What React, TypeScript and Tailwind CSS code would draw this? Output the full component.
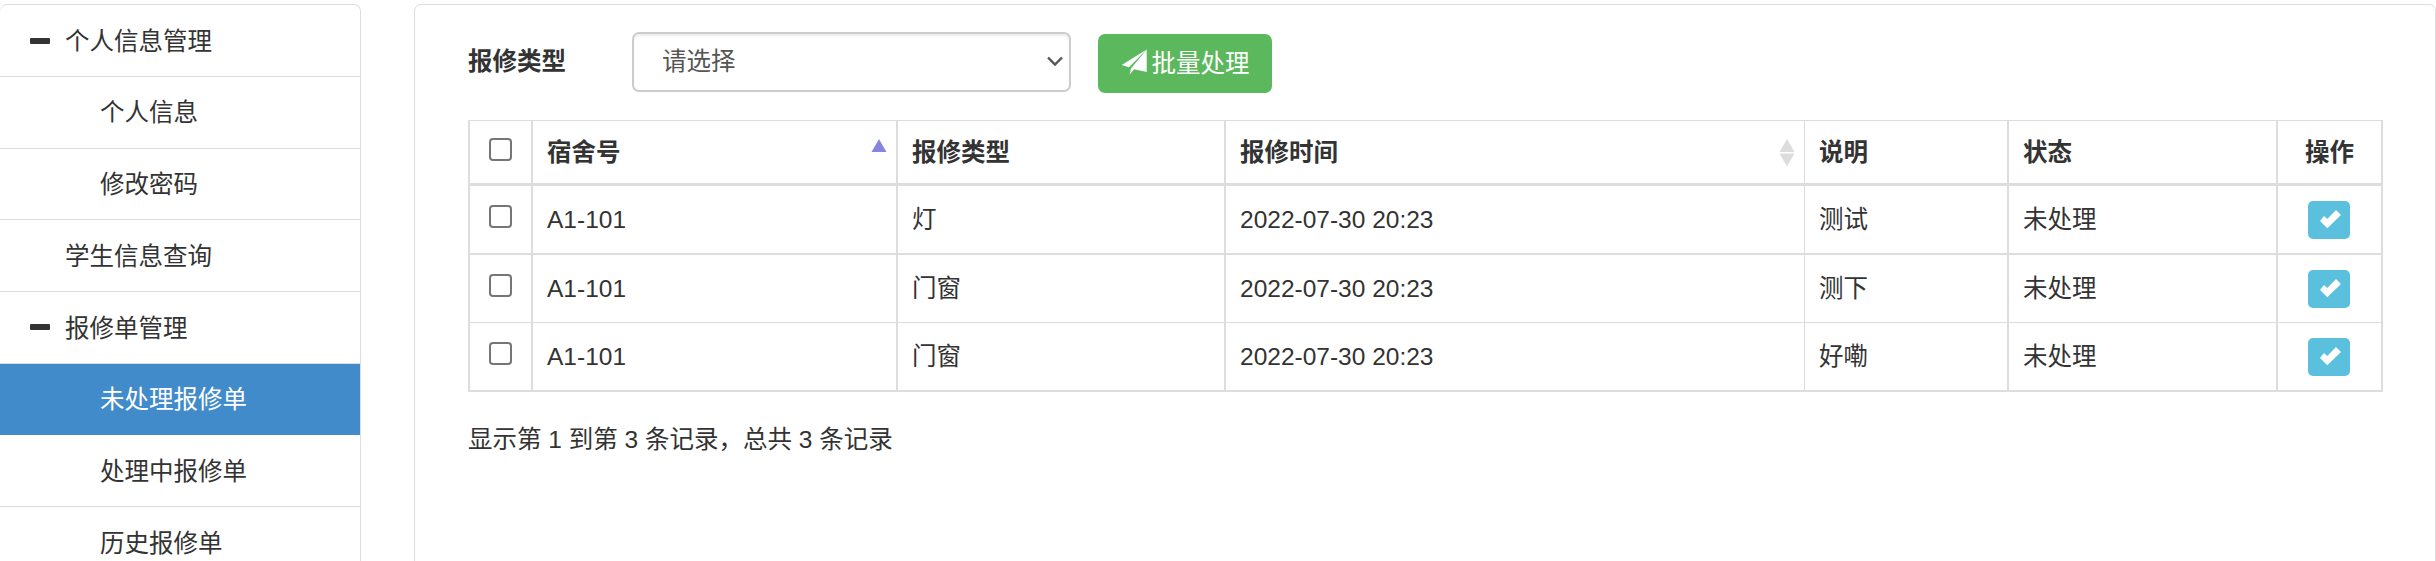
const menu = [
  { label: '个人信息管理', parent: true, open: true },
  { label: '个人信息' },
  { label: '修改密码' },
  { label: '学生信息查询', parent: true },
  { label: '报修单管理', parent: true, open: true },
  { label: '未处理报修单', active: true },
  { label: '处理中报修单' },
  { label: '历史报修单' },
];

const rows = [
  { room: 'A1-101', type: '灯', time: '2022-07-30 20:23', note: '测试', status: '未处理', rowClass: 'h-[69px] border-b-2' },
  { room: 'A1-101', type: '门窗', time: '2022-07-30 20:23', note: '测下', status: '未处理', rowClass: 'h-[68px] border-b' },
  { room: 'A1-101', type: '门窗', time: '2022-07-30 20:23', note: '好嘞', status: '未处理', rowClass: 'h-[69px] border-b-2' },
];

function SortArrows({ up, down }: { up: string; down?: string }) {
  return (
    <svg className="absolute right-[9px] top-[18px]" width="16" height="28" viewBox="0 0 16 28">
      <path d="M8 0 L15.5 13 L0.5 13 Z" fill={up} />
      {down && <path d="M0.5 14.5 L15.5 14.5 L8 27.5 Z" fill={down} />}
    </svg>
  );
}

function SendIcon() {
  return (
    <svg width="26" height="26" viewBox="0 0 26 26" fill="#fff" className="mb-[5px] shrink-0">
      <path d="M25.7 .5 L.7 16 L8 18.3 Z" />
      <path d="M25.7 .5 L10 19.5 L8.6 25.5 L13.2 20.2 L25.7 23 Z" />
    </svg>
  );
}

function CheckIcon() {
  return (
    <svg width="21" height="19" viewBox="0 0 21 19" fill="#fff" className="shrink-0">
      <path d="M0 11 L7.3 18.3 L21 5 L16 0 L7.3 9 L4 6 Z" />
    </svg>
  );
}

function Checkbox() {
  return <input type="checkbox" className="mx-auto block h-[23px] w-[23px] appearance-none rounded-[4px] border-2 border-[#767676] bg-white" />;
}

export default function App() {
  return (
    <div className="flex h-[561px] w-[2436px] overflow-hidden bg-white text-[24.5px] text-[#333] [font-family:'Liberation_Sans','Noto_Sans_CJK_SC',sans-serif]">
      {/* Sidebar */}
      <div className="mt-[4px] h-[640px] w-[361px] shrink-0 rounded-tr-[7px] rounded-tl-[7px] border border-l-0 border-[#ddd] pt-[0.3px]">
        {menu.map((item) => (
          <div
            key={item.label}
            className={`flex h-[71.7px] items-center border-b pt-[3px] ${item.parent ? 'pl-[30px]' : 'pl-[100px]'} ${
              item.active ? 'border-[#428bca] bg-[#428bca] text-white' : 'border-[#ddd]'
            }`}
          >
            {item.parent && (
              <span className="flex w-[35px] shrink-0">
                {item.open && <span className="mb-[3px] h-[6px] w-[20px] rounded-[1px] bg-[#333]"></span>}
              </span>
            )}
            {item.label}
          </div>
        ))}
      </div>

      {/* Main panel */}
      <div className="ml-[53px] mt-[4px] h-[640px] w-[2022px] shrink-0 rounded-[7px] border border-[#ddd] pl-[53px] pt-[27px]">
        <div className="flex h-[61px] items-start">
          <label className="flex h-[60px] w-[164px] shrink-0 items-center pt-[1px] font-bold">报修类型</label>
          <div className="relative h-[60px] w-[439px] shrink-0">
            <select className="h-full w-full appearance-none rounded-[7px] border-2 border-[#ccc] bg-white pl-[28px] text-[#555] shadow-[inset_0_2px_2px_rgba(0,0,0,0.075)]">
              <option>请选择</option>
            </select>
            <svg className="absolute right-[8px] top-[24px]" width="16" height="11" viewBox="0 0 16 11" fill="none" stroke="#555" strokeWidth="2.4">
              <path d="M1 1.5 L8 8.5 L15 1.5" />
            </svg>
          </div>
          <button className="ml-[27px] mt-[2px] flex h-[59px] w-[174px] items-center justify-center gap-[5px] rounded-[7px] bg-[#5cb85c] pt-[2px] text-white">
            <SendIcon />
            批量处理
          </button>
        </div>

        <table className="mt-[27px] w-[1915px] table-fixed border-separate border-spacing-0 border-b-0 border-l-2 border-t border-[#ddd]">
          <colgroup>
            <col className="w-[63px]" />
            <col className="w-[365px]" />
            <col className="w-[328px]" />
            <col className="w-[579px]" />
            <col className="w-[204px]" />
            <col className="w-[269px]" />
            <col className="w-[105px]" />
          </colgroup>
          <thead>
            <tr className="h-[65px] text-left font-bold">
              <th className="border-b-[3px] border-r-2 border-[#ddd] pb-[5px] align-middle">
                <Checkbox />
              </th>
              <th className="relative border-b-[3px] border-r-2 border-[#ddd] pl-[14px] pt-[2px]">
                宿舍号
                <SortArrows up="#8686e0" />
              </th>
              <th className="border-b-[3px] border-r-2 border-[#ddd] pl-[14px] pt-[2px]">报修类型</th>
              <th className="relative border-b-[3px] border-r border-[#ddd] pl-[14px] pt-[2px]">
                报修时间
                <SortArrows up="#dddddd" down="#dddddd" />
              </th>
              <th className="border-b-[3px] border-r-2 border-[#ddd] pl-[14px] pt-[2px]">说明</th>
              <th className="border-b-[3px] border-r-2 border-[#ddd] pl-[14px] pt-[2px]">状态</th>
              <th className="border-b-[3px] border-r-2 border-[#ddd] pt-[2px] text-center">操作</th>
            </tr>
          </thead>
          <tbody>
            {rows.map((row, i) => (
              <tr key={i}>
                <td className={`${row.rowClass} border-r-2 border-[#ddd] pb-[6px]`}>
                  <Checkbox />
                </td>
                <td className={`${row.rowClass} border-r-2 border-[#ddd] pl-[14px] pt-[2px]`}>{row.room}</td>
                <td className={`${row.rowClass} border-r-2 border-[#ddd] pl-[14px] pt-[2px]`}>{row.type}</td>
                <td className={`${row.rowClass} border-r border-[#ddd] pl-[14px] pt-[2px]`}>{row.time}</td>
                <td className={`${row.rowClass} border-r-2 border-[#ddd] pl-[14px] pt-[2px]`}>{row.note}</td>
                <td className={`${row.rowClass} border-r-2 border-[#ddd] pl-[14px] pt-[2px]`}>{row.status}</td>
                <td className={`${row.rowClass} border-r-2 border-[#ddd]`}>
                  <button className="ml-[30px] flex h-[38px] w-[42px] items-center justify-center rounded-[5px] bg-[#5bc0de] pb-[1px] pl-[3px]">
                    <CheckIcon />
                  </button>
                </td>
              </tr>
            ))}
          </tbody>
        </table>

        <div className="mt-[30px] h-[35px] leading-[35px]">显示第 1 到第 3 条记录，总共 3 条记录</div>
      </div>
    </div>
  );
}
